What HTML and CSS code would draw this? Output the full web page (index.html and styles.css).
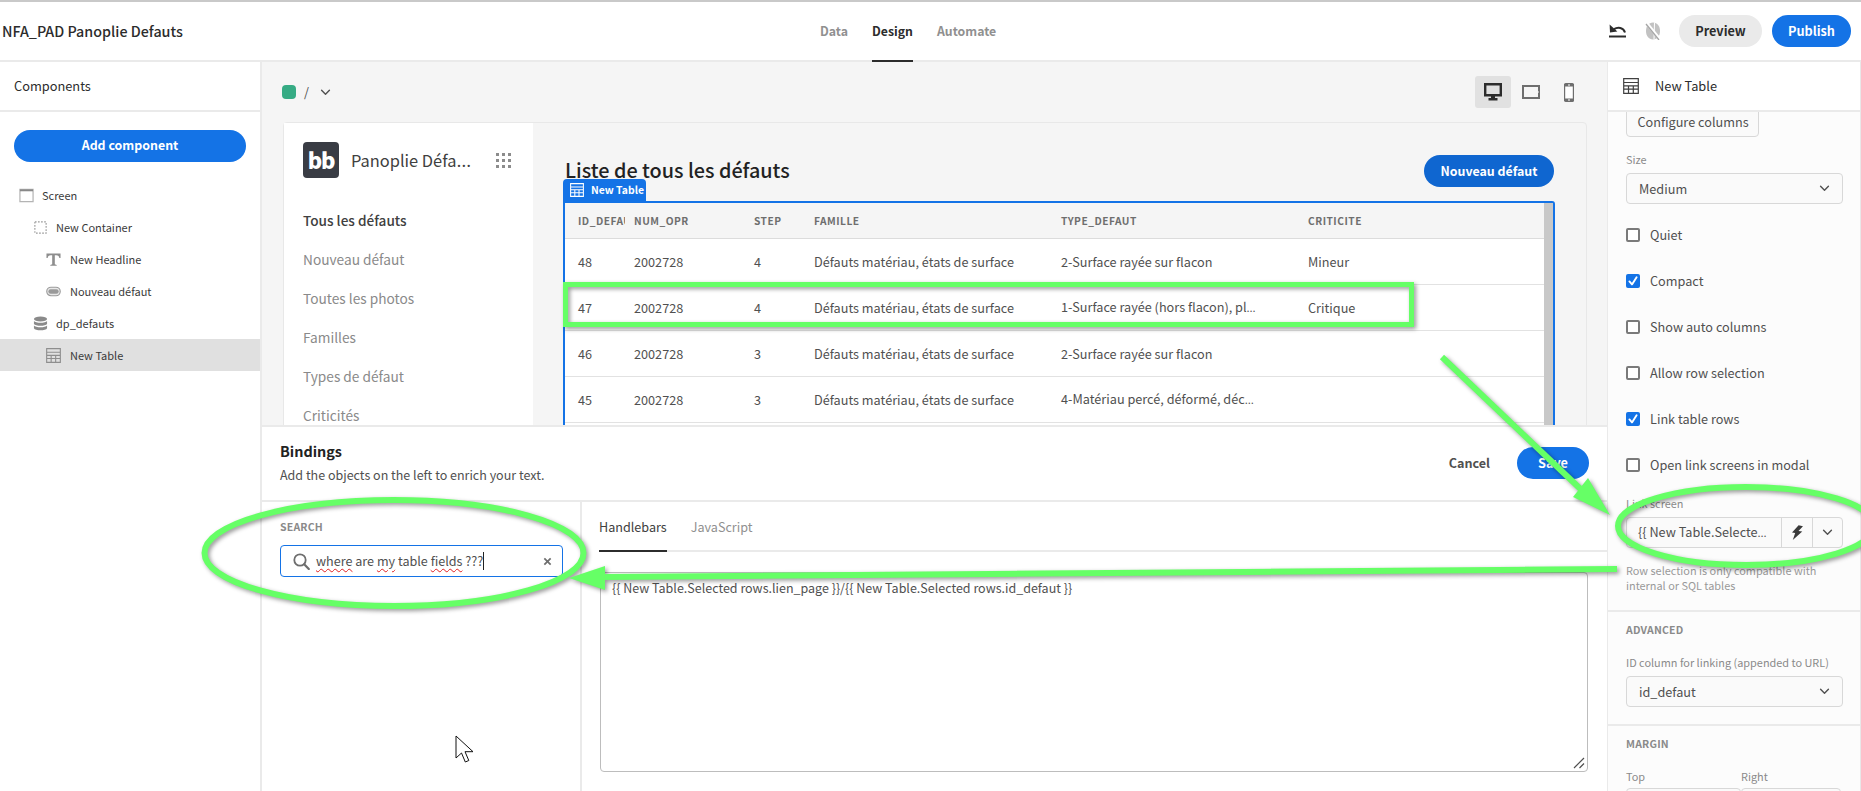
FILE: index.html
```html
<!DOCTYPE html>
<html lang="fr">
<head>
<meta charset="utf-8">
<title>NFA_PAD Panoplie Defauts</title>
<link rel="stylesheet" href="styles.css">
</head>
<body>
<svg class="defs" width="0" height="0" aria-hidden="true">
  <symbol id="i-table" viewBox="0 0 16 16">
    <path d="M.7.7h14.6v14.6H.7zM.7 4.500h14.600M.7 7.800h14.600M.7 11.200h14.600M5.500 7.800v7.500M10.300 7.800v7.500" fill="none" stroke="currentColor" stroke-width="1.200"/>
  </symbol>
  <symbol id="i-chev" viewBox="0 0 12 8">
    <path d="M1.500 1.500 6 6l4.500-4.500" fill="none" stroke="currentColor" stroke-width="1.600" stroke-linecap="round" stroke-linejoin="round"/>
  </symbol>
  <symbol id="i-check" viewBox="0 0 14 14">
    <rect width="14" height="14" rx="2" fill="#1473e6"/>
    <path d="M3.400 7.400 6 10.400 10.600 3.200" fill="none" stroke="#fff" stroke-width="1.900" stroke-linecap="round" stroke-linejoin="round"/>
  </symbol>
</svg>

<div class="app">
  <header class="topbar">
    <div class="app-name">NFA_PAD Panoplie Defauts</div>
    <nav class="modes">
      <span class="mode">Data</span>
      <span class="mode mode-on">Design</span>
      <span class="mode">Automate</span>
    </nav>
    <div class="top-actions">
      <svg class="ic-undo" viewBox="0 0 17 14"><path d="M5 5.200c3.800-2.600 9.400-1.800 11 3.300" fill="none" stroke="#2c2c2c" stroke-width="2"/><path d="M.6 .4 1 8.600l7.400-1.200z" fill="#2c2c2c"/><path d="M0 12.500h17" stroke="#2c2c2c" stroke-width="2"/></svg>
      <svg class="ic-off" viewBox="0 0 16 18"><path d="M8 .5c4.300 0 7 3.600 7 8.500s-2.700 8.500-7 8.500S1 13.900 1 9 3.700.5 8 .5z" fill="#c2c2c2"/><path d="M1.500 1 14.500 17" stroke="#fff" stroke-width="3.200"/><path d="M9.500 .5 9 17.500" stroke="#fff" stroke-width="1"/><path d="M1 2 14 18" stroke="#a6a6a6" stroke-width="1.300"/></svg>
      <button class="pill pill-grey">Preview</button>
      <button class="pill pill-blue">Publish</button>
    </div>
  </header>

  <div class="workspace">
    <aside class="tree">
      <div class="panel-head">Components</div>
      <div class="tree-body">
        <button class="add-btn">Add component</button>
        <ul class="tree-list">
          <li class="node lvl0"><svg class="ni" viewBox="0 0 16 16"><path d="M1 1.500h14v13H1z" fill="#fff" stroke="#b4b4b4" stroke-width="1.300"/><path d="M1 2.500h14" stroke="#888" stroke-width="2"/></svg>Screen</li>
          <li class="node lvl1"><svg class="ni" viewBox="0 0 16 16"><path d="M2 2h12v12H2z" fill="none" stroke="#9a9a9a" stroke-width="1.200" stroke-dasharray="1.800 1.500"/></svg>New Container</li>
          <li class="node lvl2"><svg class="ni" viewBox="0 0 16 16"><path d="M.5 1.500h15v5h-1.300c-.3-2-1-3-3.400-3H9.400v9.500l2 .8v.9H4.600v-.9l2-.8V3.500H5.200c-2.400 0-3.100 1-3.400 3H.5z" fill="#8e8e8e"/></svg>New Headline</li>
          <li class="node lvl2"><svg class="ni" viewBox="0 0 16 16"><rect x=".8" y="3.500" width="14.400" height="9" rx="4.500" fill="#e8e8e8" stroke="#9a9a9a" stroke-width="1.200"/><rect x="2.500" y="5.500" width="11" height="5" rx="2.500" fill="#9a9a9a"/></svg>Nouveau défaut</li>
          <li class="node lvl1"><svg class="ni" viewBox="0 0 16 16"><ellipse cx="8" cy="3.200" rx="7" ry="2.700" fill="#8a8a8a"/><path d="M1 5.200c1.500 2.600 12.500 2.600 14 0v3.300c-1.500 2.600-12.500 2.600-14 0zM1 10c1.500 2.600 12.500 2.600 14 0v3c-1 3-13 3-14 0z" fill="#8a8a8a"/></svg>dp_defauts</li>
          <li class="node lvl2 node-on"><svg class="ni ni-table"><use href="#i-table"/></svg>New Table</li>
        </ul>
      </div>
    </aside>

    <main class="stage">
      <div class="stage-bar">
        <div class="route">
          <span class="route-dot"></span>
          <span class="route-path">/</span>
          <svg class="chev"><use href="#i-chev"/></svg>
        </div>
        <div class="devices">
          <span class="device device-on"><svg class="ic-desk" viewBox="0 0 18 18"><path d="M1.200 1.200h15.600v11H1.200z" fill="none" stroke="#2c2c2c" stroke-width="2.400"/><path d="M7 13h4v2h2.500v2.500h-9V15H7z" fill="#2c2c2c"/></svg></span>
          <span class="device"><svg class="ic-tab" viewBox="0 0 18 14"><path d="M1 1h16v12H1z" fill="none" stroke="#6e6e6e" stroke-width="2"/><path d="M15.500 6v2" stroke="#f5f5f5" stroke-width="2"/></svg></span>
          <span class="device"><svg class="ic-phone" viewBox="0 0 10 19"><rect x=".6" y=".6" width="8.800" height="17.800" rx="1" fill="#fff" stroke="#6e6e6e" stroke-width="1.200"/><path d="M0 2.200h10M0 16.800h10" stroke="#6e6e6e" stroke-width="2.400"/><path d="M4 2h2M4 17h2" stroke="#fff" stroke-width="1"/></svg></span>
        </div>
      </div>

      <section class="preview">
        <div class="pv-side">
          <div class="pv-brand">
            <span class="logo">bb</span>
            <span class="pv-name">Panoplie Défa<span class="ell">…</span></span>
            <svg class="pv-grid" viewBox="0 0 15 15"><g fill="#8c8c8c"><rect width="3" height="3"/><rect x="6" width="3" height="3"/><rect x="12" width="3" height="3"/><rect y="6" width="3" height="3"/><rect x="6" y="6" width="3" height="3"/><rect x="12" y="6" width="3" height="3"/><rect y="12" width="3" height="3"/><rect x="6" y="12" width="3" height="3"/><rect x="12" y="12" width="3" height="3"/></g></svg>
          </div>
          <ul class="pv-nav">
            <li class="pv-link pv-link-on">Tous les défauts</li>
            <li class="pv-link">Nouveau défaut</li>
            <li class="pv-link">Toutes les photos</li>
            <li class="pv-link">Familles</li>
            <li class="pv-link">Types de défaut</li>
            <li class="pv-link">Criticités</li>
          </ul>
        </div>
        <div class="pv-main">
          <div class="pv-head">
            <h1 class="pv-title">Liste de tous les défauts</h1>
            <button class="new-btn">Nouveau défaut</button>
          </div>
          <div class="tbl-wrap">
            <div class="tbl-tag"><svg class="tag-ic"><use href="#i-table"/></svg>New Table</div>
            <table class="tbl">
              <colgroup><col class="c1"><col class="c2"><col class="c3"><col class="c4"><col class="c5"><col class="c6"></colgroup>
              <thead>
                <tr><th>ID_DEFAUT</th><th>NUM_OPR</th><th>STEP</th><th>FAMILLE</th><th>TYPE_DEFAUT</th><th>CRITICITE</th></tr>
              </thead>
              <tbody>
                <tr><td>48</td><td>2002728</td><td>4</td><td>Défauts matériau, états de surface</td><td>2-Surface rayée sur flacon</td><td>Mineur</td></tr>
                <tr><td>47</td><td>2002728</td><td>4</td><td>Défauts matériau, états de surface</td><td>1-Surface rayée (hors flacon), pl<span class="ell">…</span></td><td>Critique</td></tr>
                <tr><td>46</td><td>2002728</td><td>3</td><td>Défauts matériau, états de surface</td><td>2-Surface rayée sur flacon</td><td></td></tr>
                <tr><td>45</td><td>2002728</td><td>3</td><td>Défauts matériau, états de surface</td><td>4-Matériau percé, déformé, déc<span class="ell">…</span></td><td></td></tr>
              </tbody>
            </table>
            <div class="tbl-scroll"></div>
          </div>
        </div>
      </section>

      <section class="drawer">
        <div class="dr-head">
          <div>
            <div class="dr-title">Bindings</div>
            <div class="dr-sub">Add the objects on the left to enrich your text.</div>
          </div>
          <div class="dr-actions">
            <button class="cancel">Cancel</button>
            <button class="pill pill-blue save">Save</button>
          </div>
        </div>
        <div class="dr-body">
          <div class="dr-left">
            <div class="caps">SEARCH</div>
            <div class="search">
              <svg class="ic-search" viewBox="0 0 17 17"><circle cx="7" cy="7" r="5.700" fill="none" stroke="#6e6e6e" stroke-width="1.800"/><path d="m11.200 11.200 4.600 4.800" stroke="#6e6e6e" stroke-width="2.200" stroke-linecap="round"/></svg>
              <span class="search-text"><span class="typo">where</span> are <span class="typo">my</span> table <span class="typo">fields</span> ???</span><span class="caret"></span>
              <svg class="ic-x" viewBox="0 0 10 10"><path d="m1.500 1.500 7 7M8.500 1.500l-7 7" stroke="#6e6e6e" stroke-width="1.900"/></svg>
            </div>
          </div>
          <div class="dr-right">
            <div class="tabs">
              <span class="tab tab-on">Handlebars</span>
              <span class="tab">JavaScript</span>
            </div>
            <div class="editor">
              <div class="editor-text">{{ New Table.Selected rows.lien_page }}/{{ New Table.Selected rows.id_defaut }}</div>
              <svg class="grip" viewBox="0 0 12 12"><path d="M1 11 11 1M6.500 11 11 6.500" stroke="#505050" stroke-width="1.200"/></svg>
            </div>
          </div>
        </div>
      </section>
    </main>

    <aside class="props">
      <div class="panel-head props-head"><svg class="props-ic"><use href="#i-table"/></svg>New Table</div>
      <div class="props-body">
        <section class="sec sec-first">
          <button class="cfg-btn">Configure columns</button>
          <div class="lbl lbl-size">Size</div>
          <div class="select"><span>Medium</span><svg class="chev"><use href="#i-chev"/></svg></div>
          <div class="checks">
            <div class="chk"><span class="box"></span>Quiet</div>
            <div class="chk"><svg class="box-on"><use href="#i-check"/></svg>Compact</div>
            <div class="chk"><span class="box"></span>Show auto columns</div>
            <div class="chk"><span class="box"></span>Allow row selection</div>
            <div class="chk"><svg class="box-on"><use href="#i-check"/></svg>Link table rows</div>
            <div class="chk"><span class="box"></span>Open link screens in modal</div>
          </div>
          <div class="lbl lbl-link">Link screen</div>
          <div class="combo">
            <span class="combo-val">{{ New Table.Selecte<span class="ell">…</span></span>
            <span class="combo-btn"><svg class="ic-bolt" viewBox="0 0 12 16"><path d="M6.500 0 1 8.200h3.200L2.800 15.500 11 5.800H7.200L11 .6z" fill="#3a3a3a" transform="rotate(8 6 8)"/></svg></span>
            <span class="combo-btn"><svg class="chev"><use href="#i-chev"/></svg></span>
          </div>
          <p class="hint">Row selection is only compatible with internal or SQL tables</p>
        </section>
        <section class="sec">
          <div class="caps">ADVANCED</div>
          <div class="lbl lbl-id">ID column for linking (appended to URL)</div>
          <div class="select"><span>id_defaut</span><svg class="chev"><use href="#i-chev"/></svg></div>
        </section>
        <section class="sec">
          <div class="caps">MARGIN</div>
          <div class="margins">
            <div><div class="lbl">Top</div><div class="stub"></div></div>
            <div><div class="lbl">Right</div><div class="stub"></div></div>
          </div>
        </section>
      </div>
    </aside>
  </div>
</div>

<svg class="marks" viewBox="0 0 1861 791" aria-hidden="true">
  <rect x="565.500" y="284.500" width="846" height="40" fill="none" stroke="#66ff66" stroke-width="5"/>
  <ellipse cx="394" cy="553" rx="189.500" ry="53" fill="none" stroke="#66ff66" stroke-width="6"/>
  <ellipse cx="1746" cy="526" rx="128" ry="39" fill="none" stroke="#66ff66" stroke-width="6"/>
  <path d="M1442 357 1590 498" fill="none" stroke="#66ff66" stroke-width="6"/>
  <path d="M1610 515 1588 478 1573 497z" fill="#66ff66"/>
  <path d="M1617 569 600 577" fill="none" stroke="#66ff66" stroke-width="6"/>
  <path d="M569 578 605 566 605 590z" fill="#66ff66"/>
</svg>

<svg class="pointer" viewBox="0 0 19 28" aria-hidden="true"><path d="M1 1v22l5.500-5 3.800 9 3.500-1.500-3.800-8.800H18z" fill="#fff" stroke="#111" stroke-width="1"/></svg>
</body>
</html>
```
FILE: styles.css
```css
* { box-sizing: border-box; }
html, body { margin: 0; height: 100%; overflow: hidden; }
body {
  position: relative;
  background: #fff;
  color: #2c2c2c;
  font-family: "Noto Sans CJK JP", "Source Sans Pro", "Open Sans", sans-serif;
  font-size: 12.7px;
  line-height: 16px;
}
ul { list-style: none; margin: 0; padding: 0; }
button { font: inherit; border: 0; padding: 0; }
.defs { position: absolute; }
.ell { font-family: "Open Sans", sans-serif; font-size: .92em; letter-spacing: .4px; }

.app { display: flex; flex-direction: column; height: 791px; border-top: 2px solid #c9c9c9; }

/* top bar */
.topbar {
  flex: 0 0 60px;
  display: flex;
  align-items: center;
  padding: 0 10px 0 2px;
  border-bottom: 2px solid #eaeaea;
}
.app-name { flex: 0 0 818px; font-size: 14.300px; font-weight: 500; color: #2c2c2c; }
.modes { display: flex; gap: 24px; align-self: stretch; font-size: 12.300px; }
.mode { display: flex; align-items: center; font-weight: 600; color: #909090; border-bottom: 2px solid transparent; margin-bottom: -2px; padding-bottom: 1px; }
.mode-on { color: #2c2c2c; border-bottom-color: #2c2c2c; }
.top-actions { flex: 1; display: flex; align-items: center; justify-content: flex-end; }
.ic-undo { width: 17px; height: 14px; margin-right: 19px; }
.ic-off { width: 16px; height: 18px; margin-right: 18px; }
.pill { height: 32px; border-radius: 16px; font-weight: 600; font-size: 12.700px; }
.pill-grey { width: 83px; background: #eaeaea; color: #2c2c2c; margin-right: 10px; }
.pill-blue { width: 79px; background: #1473e6; color: #fff; }

.workspace { flex: 1; display: flex; min-height: 0; }

/* shared panel header */
.panel-head {
  height: 50px;
  display: flex;
  align-items: center;
  padding: 0 14px;
  border-bottom: 2px solid #eaeaea;
  font-size: 12.800px;
  background: #fff;
}

/* tree */
.tree { flex: 0 0 262px; border-right: 2px solid #eaeaea; background: #fff; }
.tree-body { padding-top: 18px; }
.add-btn { display: block; width: 232px; height: 32px; margin: 0 14px 17px; padding-bottom: 2px; border-radius: 16px; background: #1473e6; color: #fff; font-weight: 600; font-size: 12.400px; }
.node { display: flex; align-items: center; height: 32px; font-size: 11px; color: #3a3a3a; }
.lvl0 { padding-left: 19px; }
.lvl1 { padding-left: 33px; }
.lvl2 { padding-left: 46px; }
.ni { flex: none; width: 15px; height: 15px; margin-right: 8px; }
.lvl2 .ni { margin-right: 9px; }
.ni-table { color: #8e8e8e; }
.node-on { background: #e0e0e0; }

/* stage */
.stage { position: relative; flex: 1; min-width: 0; background: #f5f5f5; overflow: hidden; }
.stage-bar { height: 60px; display: flex; align-items: center; justify-content: space-between; padding: 0 20px 0 20px; }
.route { display: flex; align-items: center; }
.route-dot { width: 14px; height: 14px; border-radius: 4px; background: #36ab84; margin-right: 8px; }
.route-path { font-size: 12.700px; margin-right: 11px; color: #505050; }
.chev { width: 11px; height: 7px; color: #505050; }
.devices { display: flex; gap: 2px; margin-right: 0; }
.device { width: 36px; height: 32px; display: flex; align-items: center; justify-content: center; border-radius: 3px; }
.device-on { background: #e1e1e1; }
.ic-desk { width: 18px; height: 18px; }
.ic-tab { width: 18px; height: 14px; }
.ic-phone { width: 10px; height: 19px; }

.preview { display: flex; height: 400px; margin: 0 20px 0 21px; border: 1px solid #e8e8e8; border-radius: 4px; background: #f5f5f5; }
.pv-side { flex: 0 0 249px; background: #fff; padding: 19px 20px 0 19px; }
.pv-brand { display: flex; align-items: center; }
.logo { flex: none; width: 36px; height: 36px; border-radius: 4px; background: #393c44; color: #fff; font-size: 22px; font-weight: 900; letter-spacing: -1.200px; line-height: 34px; text-align: center; }
.pv-name { flex: 1; margin-left: 12px; font-size: 16.400px; color: #404040; line-height: 22px; white-space: nowrap; }
.pv-name .ell { font-size: 1.150em; letter-spacing: .6px; }
.pv-grid { flex: none; width: 15px; height: 15px; margin-right: 2px; }
.pv-nav { margin-top: 23px; }
.pv-link { height: 39px; display: flex; align-items: center; font-size: 13.700px; color: #8a8a8a; padding-bottom: 1px; }
.pv-link-on { color: #404040; font-weight: 500; font-size: 13.600px; }

.pv-main { flex: 1; min-width: 0; padding: 32px 32px 0; }
.pv-head { display: flex; align-items: center; justify-content: space-between; height: 32px; margin-bottom: 14px; }
.pv-title { margin: 0; font-size: 19.800px; line-height: 30px; font-weight: 500; color: #222; position: relative; top: -1px; }
.new-btn { width: 130px; height: 32px; border-radius: 16px; background: #0f66d0; color: #fff; font-weight: 700; font-size: 12.400px; }

.tbl-wrap { position: relative; margin-left: -2px; margin-right: -1px; border: 2px solid #1473e6; border-radius: 0 3px 0 0; background: #fff; height: 300px; }
.tbl-tag { position: absolute; left: -2px; top: -24px; width: 83px; height: 22px; display: flex; align-items: center; padding-left: 7px; border-radius: 4px 4px 0 0; background: #1473e6; color: #fff; font-size: 10.400px; font-weight: 700; white-space: nowrap; }
.tag-ic { flex: none; width: 14px; height: 14px; margin-right: 7px; color: #fff; }
.tbl { width: 980px; table-layout: fixed; border-collapse: collapse; }
.c1 { width: 60px; } .c2 { width: 116px; } .c3 { width: 60px; } .c4 { width: 247px; } .c5 { width: 247px; } .c6 { width: 250px; }
.tbl th, .tbl td { padding: 1px 0 0 13px; overflow: hidden; white-space: nowrap; text-align: left; }
.tbl th:nth-child(2), .tbl td:nth-child(2) { padding-left: 9px; }
.tbl th { height: 35px; background: #f5f5f5; border-bottom: 1px solid #dcdcdc; font-size: 10.200px; font-weight: 600; letter-spacing: .5px; color: #6e6e6e; }
.tbl td { height: 46px; border-bottom: 1px solid #e2e2e2; font-size: 12.700px; color: #505050; }
.tbl-scroll { position: absolute; top: 0; right: 0; width: 9px; height: 100%; background: #c8c8c8; }

/* drawer */
.drawer { position: absolute; left: 0; right: 0; top: 363px; bottom: 0; background: #fff; border-top: 2px solid #eaeaea; display: flex; flex-direction: column; }
.dr-head { flex: 0 0 75px; display: flex; justify-content: space-between; padding: 15px 18px 0 18px; border-bottom: 2px solid #eaeaea; }
.dr-title { font-size: 14.400px; font-weight: 600; line-height: 18px; color: #222; }
.dr-sub { margin-top: 7px; color: #505050; font-size: 12.500px; }
.dr-actions { display: flex; align-items: flex-start; padding-top: 5px; }
.cancel { background: none; color: #505050; font-weight: 700; margin-right: 27px; height: 32px; font-size: 12.600px; }
.save { width: 72px; }
.dr-body { flex: 1; display: flex; min-height: 0; }
.dr-left { flex: 0 0 320px; border-right: 2px solid #eaeaea; padding: 17px 17px 0 18px; }
.caps { font-size: 10.500px; font-weight: 600; letter-spacing: .2px; color: #8a8a8a; }
.search { display: flex; align-items: center; height: 32px; margin-top: 10px; padding: 0 10px 0 12px; border: 1px solid #1473e6; border-radius: 4px; background: #fff; }
.ic-search { flex: none; width: 17px; height: 17px; margin-right: 6px; }
.search-text { color: #505050; white-space: nowrap; font-size: 12.600px; }
.typo { text-decoration: underline wavy #e02020 1px; text-underline-offset: 2px; }
.caret { width: 1px; height: 18px; background: #222; }
.ic-x { flex: none; width: 9px; height: 9px; margin-left: auto; }
.dr-right { flex: 1; min-width: 0; padding-left: 18px; }
.tabs { display: flex; gap: 24px; height: 50px; padding-top: 17px; padding-left: 0; border-bottom: 2px solid #eaeaea; font-size: 12.600px; }
.tab { height: 33px; color: #909090; }
.tab-on { color: #404040; border-bottom: 2px solid #2c2c2c; margin-left: -1px; }
.editor { position: relative; height: 200px; margin: 20px 19px 0 0; padding: 7px 11px; border: 1px solid #bdbdbd; border-radius: 4px; color: #505050; white-space: nowrap; }
.editor-text { font-size: 12.500px; }
.grip { position: absolute; right: 2px; bottom: 2px; width: 12px; height: 12px; }

/* properties */
.props { position: relative; flex: 0 0 254px; border-left: 1px solid #eaeaea; border-right: 1px solid #e8e8e8; overflow: hidden; background: #fcfcfc; }
.props-head { position: relative; z-index: 1; padding-left: 15px; }
.props-ic { flex: none; width: 16px; height: 16px; margin-right: 16px; color: #404040; }
.props-body { margin-top: -7px; }
.sec { padding: 10px 17px 17px 18px; border-top: 2px solid #eaeaea; }
.sec-first { border-top: 0; padding-top: 0; }
.cfg-btn { display: block; width: 133px; height: 32px; padding: 2px 0 0 1px; background: #fafafa; border: 1px solid #d8d8d8; border-radius: 4px; color: #505050; font-size: 12.700px; }
.lbl { font-size: 10.900px; color: #8a8a8a; white-space: nowrap; }
.lbl-size { margin-top: 14px; }
.select { display: flex; align-items: center; justify-content: space-between; height: 31px; margin-top: 6px; padding: 0 12px; background: #fafafa; border: 1px solid #d8d8d8; border-radius: 4px; color: #505050; }
.checks { margin-top: 7.500px; }
.chk { display: flex; align-items: center; height: 46px; color: #505050; }
.box { flex: none; width: 14px; height: 14px; margin-right: 10px; border: 2px solid #7a7a7a; border-radius: 2px; background: #fff; }
.box-on { flex: none; width: 14px; height: 14px; margin-right: 10px; }
.lbl-link { margin-top: 7.500px; }
.combo { display: flex; height: 31px; margin-top: 6px; background: #fafafa; border: 1px solid #d8d8d8; border-radius: 4px; color: #505050; }
.combo-val { width: 154px; padding-left: 11px; line-height: 27px; white-space: nowrap; overflow: hidden; }
.combo-btn { flex: 1; display: flex; align-items: center; justify-content: center; border-left: 1px solid #d8d8d8; }
.ic-bolt { width: 12px; height: 16px; }
.hint { margin: 15px 0 0; font-size: 10.900px; line-height: 15px; color: #999; }
.lbl-id { margin-top: 16px; }
.margins { display: grid; grid-template-columns: 115px 100px; margin-top: 16px; }
.stub { height: 31px; margin-top: 4px; background: #fafafa; border: 1px solid #d8d8d8; border-radius: 4px; }

/* annotations drawn over the screenshot */
.marks { position: absolute; left: 0; top: 0; width: 1861px; height: 791px; pointer-events: none; filter: drop-shadow(2px 2px 2px rgba(0, 0, 0, .4)); }
.pointer { position: absolute; left: 455px; top: 735px; width: 19px; height: 28px; pointer-events: none; }
```
